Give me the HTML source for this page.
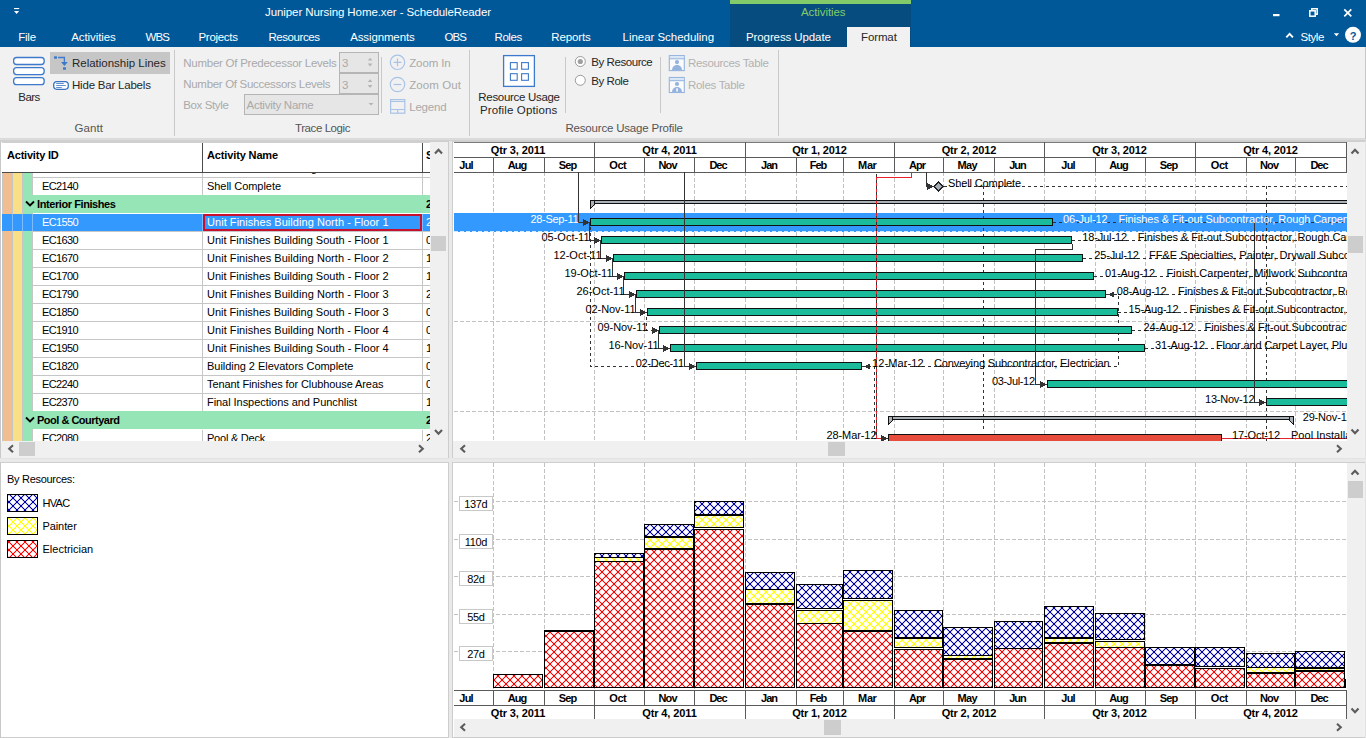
<!DOCTYPE html>
<html lang="en"><head><meta charset="utf-8"><title>Juniper Nursing Home.xer - ScheduleReader</title>
<style>
html,body{margin:0;padding:0}
body{width:1366px;height:738px;overflow:hidden;background:#e3e3e3;font-family:"Liberation Sans",sans-serif;font-size:11px;position:relative}
.t{position:absolute;white-space:pre;line-height:1}
.b{position:absolute;box-sizing:border-box}
svg{position:absolute;overflow:hidden}
svg text{font-family:"Liberation Sans",sans-serif;font-size:11px;white-space:pre}
</style></head>
<body>
<div id="titlebar">
<div class="b " style="left:0px;top:0px;width:1366px;height:47px;background:#005899;"></div>
<div class="b " style="left:730px;top:0px;width:181px;height:47px;background:#074c7f;"></div>
<div class="b " style="left:730px;top:0px;width:181px;height:4px;background:#83cb68;"></div>
<svg style="left:12px;top:6px" width="10" height="9" viewBox="0 0 10 9"><rect x="2" y="2" width="5.2" height="1.100" fill="#fff"/><path d="M2 5h5.2l-2.600 3z" fill="#fff"/></svg>
<span class="t " style="left:265px;top:7px;font-size:11.5px;color:#fff;letter-spacing:-0.085px;">Juniper Nursing Home.xer - ScheduleReader</span>
<span class="t " style="left:801px;top:7px;font-size:11.5px;color:#83cb68;letter-spacing:-0.087px;">Activities</span>
<svg style="left:1266px;top:4px" width="94" height="18" viewBox="1266 4 94 18" fill="none" stroke="#fff"><rect x="1273" y="14" width="6.5" height="2.2" fill="#fff" stroke="none"/><path d="M1311.8 10.5v-1.7h5.4v5.4h-1.7" stroke-width="1.5"/><rect x="1309.8" y="10.8" width="5.4" height="5.4" stroke-width="1.5"/><path d="M1344.3 9.3l7 7m0-7l-7 7" stroke-width="1.7"/></svg>
<svg style="left:1284px;top:26px" width="82" height="20" viewBox="1284 26 82 20"><path d="M1286.3 37.3l3.3-3.4 3.3 3.4" fill="none" stroke="#fff" stroke-width="1.9"/><path d="M1333.8 33.2h5.4l-2.7 3z" fill="#fff"/><circle cx="1353" cy="34.8" r="8" fill="#fff"/><text x="1353" y="39.6" font-size="13" font-weight="bold" text-anchor="middle" fill="#005899">?</text></svg>
<span class="t " style="left:1300.5px;top:32px;font-size:11.5px;color:#fff;letter-spacing:-0.416px;">Style</span>
<div class="b " style="left:847px;top:27px;width:63px;height:20px;background:#f1f1f1;"></div>
<span class="t " style="left:18.3px;top:32px;font-size:11.5px;color:#fff;letter-spacing:-0.258px;">File</span>
<span class="t " style="left:71.2px;top:32px;font-size:11.5px;color:#fff;letter-spacing:-0.087px;">Activities</span>
<span class="t " style="left:145.5px;top:32px;font-size:11.5px;color:#fff;letter-spacing:-0.901px;">WBS</span>
<span class="t " style="left:198.5px;top:32px;font-size:11.5px;color:#fff;letter-spacing:-0.306px;">Projects</span>
<span class="t " style="left:268.4px;top:32px;font-size:11.5px;color:#fff;letter-spacing:-0.408px;">Resources</span>
<span class="t " style="left:350.2px;top:32px;font-size:11.5px;color:#fff;letter-spacing:-0.131px;">Assignments</span>
<span class="t " style="left:444.6px;top:32px;font-size:11.5px;color:#fff;letter-spacing:-0.966px;">OBS</span>
<span class="t " style="left:494.5px;top:32px;font-size:11.5px;color:#fff;letter-spacing:-0.421px;">Roles</span>
<span class="t " style="left:551.3px;top:32px;font-size:11.5px;color:#fff;letter-spacing:-0.140px;">Reports</span>
<span class="t " style="left:622.6px;top:32px;font-size:11.5px;color:#fff;letter-spacing:-0.040px;">Linear Scheduling</span>
<span class="t " style="left:746px;top:32px;font-size:11.5px;color:#fff;letter-spacing:-0.100px;">Progress Update</span>
<span class="t " style="left:861px;top:32px;font-size:11.5px;color:#262626;letter-spacing:-0.120px;">Format</span>
</div>
<div id="ribbon">
<div class="b " style="left:0px;top:47px;width:1366px;height:92px;background:#f1f1f1;"></div>
<div class="b " style="left:0px;top:138px;width:1366px;height:1px;background:#dadada;"></div>
<div class="b " style="left:1365px;top:47px;width:1px;height:92px;background:#c6c6c6;"></div>
<div class="b " style="left:174px;top:50px;width:1px;height:86px;background:#c9c9c9;"></div>
<div class="b " style="left:469px;top:50px;width:1px;height:86px;background:#c9c9c9;"></div>
<div class="b " style="left:778px;top:50px;width:1px;height:86px;background:#c9c9c9;"></div>
<div class="b " style="left:381px;top:57px;width:1px;height:56px;background:#c9c9c9;"></div>
<div class="b " style="left:565px;top:57px;width:1px;height:56px;background:#c9c9c9;"></div>
<div class="b " style="left:660px;top:57px;width:1px;height:56px;background:#c9c9c9;"></div>
<svg style="left:12px;top:55px" width="36" height="32" viewBox="12 55 36 32" fill="#fff" stroke="#3d7acb" stroke-width="1.3"><rect x="13.6" y="57.5" width="30.6" height="7" rx="3"/><rect x="13.6" y="67.6" width="30.6" height="7" rx="3"/><rect x="13.6" y="77.7" width="30.6" height="7" rx="3"/></svg>
<span class="t " style="left:18.3px;top:92px;font-size:11.5px;color:#262626;letter-spacing:-0.539px;">Bars</span>
<div class="b " style="left:50px;top:52px;width:120px;height:22px;background:#c6c6c6;"></div>
<svg style="left:52px;top:54px" width="18" height="18" viewBox="52 54 18 18"><rect x="54" y="56.2" width="3" height="2.600" rx="0.6" fill="#3d7acb"/><path d="M58.1 57.5H64.4V62.4" fill="none" stroke="#3d7acb" stroke-width="1.3"/><path d="M61 62h6.800l-3.400 4.100z" fill="#3d7acb"/><rect x="63" y="67.2" width="3" height="2.600" rx="0.6" fill="#3d7acb"/></svg>
<span class="t " style="left:72px;top:58px;font-size:11.5px;color:#262626;letter-spacing:-0.016px;">Relationship Lines</span>
<svg style="left:52px;top:79px" width="18" height="12" viewBox="52 79 18 12" fill="none" stroke="#3a72c0"><rect x="53.7" y="81.600" width="14.6" height="7.700" rx="3.2" fill="#fff" stroke-width="1.3"/><path d="M56.200 83.5h7.600M56.200 85.500h9.600M56.200 87.500h5.600" stroke-width="0.8"/></svg>
<span class="t " style="left:72px;top:80px;font-size:11.5px;color:#262626;letter-spacing:-0.209px;">Hide Bar Labels</span>
<span class="t " style="left:74.6px;top:123px;font-size:11.5px;color:#555;letter-spacing:0.052px;">Gantt</span>
<span class="t " style="left:183.3px;top:58px;font-size:11.5px;color:#a9a9a9;letter-spacing:-0.258px;">Number Of Predecessor Levels</span>
<span class="t " style="left:183.3px;top:79px;font-size:11.5px;color:#a9a9a9;letter-spacing:-0.312px;">Number Of Successors Levels</span>
<span class="t " style="left:183.3px;top:100px;font-size:11.5px;color:#a9a9a9;letter-spacing:-0.386px;">Box Style</span>
<div class="b " style="left:339px;top:52px;width:40px;height:21px;background:#e6e6e6;border:1px solid #b5b5b5"></div>
<div class="b " style="left:339px;top:73px;width:40px;height:21px;background:#e6e6e6;border:1px solid #b5b5b5"></div>
<div class="b " style="left:244px;top:94px;width:135px;height:21px;background:#e6e6e6;border:1px solid #b5b5b5"></div>
<span class="t " style="left:342px;top:58px;font-size:11.5px;color:#a9a9a9;">3</span>
<span class="t " style="left:342px;top:80px;font-size:11.5px;color:#a9a9a9;">3</span>
<span class="t " style="left:246.5px;top:100px;font-size:11.5px;color:#a9a9a9;letter-spacing:-0.254px;">Activity Name</span>
<svg style="left:366px;top:55px" width="10" height="58" viewBox="366 55 10 58" fill="#b4b4b4"><path d="M367.8 60.5h4.6l-2.3-2.8zM367.8 63.6h4.6l-2.3 2.8zM367.8 82h4.6l-2.3-2.8zM367.8 85.100h4.6l-2.3 2.8zM368.5 103h5l-2.5 2.6z"/></svg>
<svg style="left:388px;top:53px" width="20" height="62" viewBox="388 53 20 62" fill="none" stroke="#a9c3e6" stroke-width="1.2"><circle cx="397.5" cy="62.3" r="7.2"/><path d="M393.6 62.3h7.8M397.5 58.400v7.8"/><circle cx="397.5" cy="84.500" r="7.2"/><path d="M393.6 84.500h7.8"/><rect x="390.6" y="99.6" width="14.2" height="13.6"/><path d="M390.6 101.500h14.2M390.6 109.5h14.2M397.7 109.5v3.7"/></svg>
<span class="t " style="left:409.2px;top:58px;font-size:11.5px;color:#a9a9a9;letter-spacing:-0.112px;">Zoom In</span>
<span class="t " style="left:409.2px;top:80px;font-size:11.5px;color:#a9a9a9;letter-spacing:0.082px;">Zoom Out</span>
<span class="t " style="left:409.2px;top:102px;font-size:11.5px;color:#a9a9a9;letter-spacing:-0.179px;">Legend</span>
<span class="t " style="left:295px;top:123px;font-size:11.5px;color:#555;letter-spacing:-0.423px;">Trace Logic</span>
<svg style="left:502px;top:54px" width="34" height="34" viewBox="502 54 34 34" fill="#fff" stroke="#3d7acb" stroke-width="1.3"><rect x="503.6" y="55.6" width="30.8" height="30.8"/><g stroke-width="1.1"><rect x="510.4" y="62.6" width="6.8" height="6.6"/><rect x="521.6" y="62.6" width="6.8" height="6.6"/><rect x="510.4" y="73.700" width="6.8" height="6.6"/><rect x="521.6" y="73.700" width="6.8" height="6.6"/></g></svg>
<span class="t " style="left:478.3px;top:92px;font-size:11.5px;color:#262626;letter-spacing:-0.304px;">Resource Usage</span>
<span class="t " style="left:480px;top:105px;font-size:11.5px;color:#262626;letter-spacing:0.131px;">Profile Options</span>
<svg style="left:573px;top:54px" width="14" height="34" viewBox="573 54 14 34"><circle cx="580.3" cy="61.5" r="5" fill="#fff" stroke="#9a9a9a"/><circle cx="580.3" cy="61.5" r="2.6" fill="#a0a0a0"/><circle cx="580.3" cy="80.300" r="5" fill="#fff" stroke="#9a9a9a"/></svg>
<span class="t " style="left:591.3px;top:57px;font-size:11.5px;color:#262626;letter-spacing:-0.440px;">By Resource</span>
<span class="t " style="left:591.3px;top:76px;font-size:11.5px;color:#262626;letter-spacing:-0.454px;">By Role</span>
<svg style="left:668px;top:54px" width="18" height="40" viewBox="668 54 18 40"><rect x="669.3" y="55.6" width="15" height="15" fill="#fbfbfb" stroke="#94b3de" stroke-width="1.1"/><rect x="669.9" y="56.2" width="13.8" height="2.600" fill="#d9e6f6"/><path d="M669.3 58.8h15" stroke="#94b3de" stroke-width="1"/><circle cx="677" cy="62.1" r="2.1" fill="#94b3de"/><path d="M672 70.1c0.300-6.800 9.700-6.800 10 0z" fill="#94b3de"/><rect x="669.3" y="77.5" width="15" height="15" fill="#fbfbfb" stroke="#94b3de" stroke-width="1.1"/><rect x="669.9" y="78.1" width="13.8" height="2.600" fill="#d9e6f6"/><path d="M669.3 80.7h15" stroke="#94b3de" stroke-width="1"/><circle cx="677" cy="84" r="2.1" fill="#94b3de"/><path d="M672 92c0.300-6.800 9.700-6.800 10 0z" fill="#94b3de"/><path d="M676.3 88.3h1.500v3.300h-1.500z" fill="#fff"/></svg>
<span class="t " style="left:688px;top:58px;font-size:11.5px;color:#b2b2b2;letter-spacing:-0.330px;">Resources Table</span>
<span class="t " style="left:688px;top:80px;font-size:11.5px;color:#b2b2b2;letter-spacing:-0.290px;">Roles Table</span>
<span class="t " style="left:565.5px;top:123px;font-size:11.5px;color:#555;letter-spacing:-0.193px;">Resource Usage Profile</span>
</div>
<div id="table">
<div class="b " style="left:0px;top:139px;width:1366px;height:3px;background:#dcdcdc;"></div>
<div class="b " style="left:0px;top:140px;width:1366px;height:1px;background:#d0d0d0;"></div>
<div class="b " style="left:0px;top:141px;width:449px;height:317px;background:#fff;border-left:1px solid #c8c8c8;border-top:1px solid #cfcfcf;border-right:1px solid #cdcdcd;border-bottom:1px solid #cdcdcd"></div>
<div class="b" style="left:2px;top:142px;width:428px;height:299px;overflow:hidden">
<span class="t " style="left:5px;top:8px;font-size:11px;color:#000;font-weight:bold;letter-spacing:-0.209px;">Activity ID</span>
<span class="t " style="left:205px;top:8px;font-size:11px;color:#000;font-weight:bold;letter-spacing:-0.136px;">Activity Name</span>
<span class="t " style="left:424px;top:8px;font-size:11px;color:#000;font-weight:bold;">Start</span>
<div class="b " style="left:200px;top:0px;width:1px;height:30px;background:#4a4a4a;"></div>
<div class="b " style="left:420px;top:0px;width:1px;height:30px;background:#4a4a4a;"></div>
<div class="b " style="left:0px;top:30px;width:428px;height:1px;background:#4a4a4a;"></div>
<div class="b " style="left:0px;top:0px;width:428px;height:1px;background:#d0d0d0;"></div>
<div class="b " style="left:0px;top:31px;width:1px;height:268px;background:#c6c6c6;"></div>
<div class="b " style="left:1px;top:31px;width:9px;height:268px;background:#f2be90;"></div>
<div class="b " style="left:10px;top:31px;width:1px;height:268px;background:#c6c6c6;"></div>
<div class="b " style="left:11px;top:31px;width:9px;height:268px;background:#f9df85;"></div>
<div class="b " style="left:20px;top:31px;width:1px;height:268px;background:#c6c6c6;"></div>
<div class="b " style="left:21px;top:31px;width:9px;height:268px;background:#96e5b6;"></div>
<div class="b " style="left:30px;top:31px;width:1px;height:268px;background:#c6c6c6;"></div>
<div class="b " style="left:31px;top:35px;width:397px;height:1px;background:#c6c6c6;"></div>
<div class="b " style="left:200px;top:31px;width:1px;height:4px;background:#c6c6c6;"></div>
<div class="b " style="left:420px;top:31px;width:1px;height:4px;background:#c6c6c6;"></div>
<div class="b" style="left:31px;top:31px;width:397px;height:4px;overflow:hidden">
<span class="t " style="left:245px;top:-10px;font-size:11px;color:#000;">Building</span>
</div>
<span class="t " style="left:40px;top:39px;font-size:11px;color:#000;letter-spacing:-0.628px;">EC2140</span>
<span class="t " style="left:205px;top:39px;font-size:11px;color:#000;letter-spacing:-0.042px;">Shell Complete</span>
<span class="t " style="left:424px;top:39px;font-size:11px;color:#000;"></span>
<div class="b " style="left:31px;top:53px;width:397px;height:1px;background:#c6c6c6;"></div>
<div class="b " style="left:200px;top:36px;width:1px;height:17px;background:#c6c6c6;"></div>
<div class="b " style="left:420px;top:36px;width:1px;height:17px;background:#c6c6c6;"></div>
<div class="b " style="left:21px;top:53px;width:407px;height:18px;background:#96e5b6;"></div>
<svg style="left:23px;top:57.5px" width="10" height="8" viewBox="0 0 10 8"><path d="M1 1.500l4 4 4-4" fill="none" stroke="#000" stroke-width="1.800"/></svg>
<span class="t " style="left:35px;top:57px;font-size:11px;color:#000;font-weight:bold;letter-spacing:-0.416px;">Interior Finishes</span>
<span class="t " style="left:424px;top:57px;font-size:11px;color:#000;font-weight:bold;">2</span>
<div class="b " style="left:0px;top:72px;width:428px;height:17px;background:#3399ff;"></div>
<div class="b " style="left:10px;top:72px;width:1px;height:17px;background:#7dbcff;"></div>
<div class="b " style="left:20px;top:72px;width:1px;height:17px;background:#7dbcff;"></div>
<div class="b " style="left:30px;top:72px;width:1px;height:17px;background:#7dbcff;"></div>
<span class="t " style="left:40px;top:75px;font-size:11px;color:#fff;letter-spacing:-0.628px;">EC1550</span>
<span class="t " style="left:205px;top:75px;font-size:11px;color:#fff;letter-spacing:0.049px;">Unit Finishes Building North - Floor 1</span>
<span class="t " style="left:424px;top:75px;font-size:11px;color:#fff;">2</span>
<div class="b " style="left:31px;top:89px;width:397px;height:1px;background:#c6c6c6;"></div>
<div class="b " style="left:200px;top:72px;width:1px;height:17px;background:#7dbcff;"></div>
<div class="b " style="left:420px;top:72px;width:1px;height:17px;background:#7dbcff;"></div>
<div class="b " style="left:201px;top:72px;width:219px;height:17px;border:2px solid #c8102e"></div>
<span class="t " style="left:40px;top:93px;font-size:11px;color:#000;letter-spacing:-0.628px;">EC1630</span>
<span class="t " style="left:205px;top:93px;font-size:11px;color:#000;letter-spacing:0.000px;">Unit Finishes Building South - Floor 1</span>
<span class="t " style="left:424px;top:93px;font-size:11px;color:#000;">0</span>
<div class="b " style="left:31px;top:107px;width:397px;height:1px;background:#c6c6c6;"></div>
<div class="b " style="left:200px;top:90px;width:1px;height:17px;background:#c6c6c6;"></div>
<div class="b " style="left:420px;top:90px;width:1px;height:17px;background:#c6c6c6;"></div>
<span class="t " style="left:40px;top:111px;font-size:11px;color:#000;letter-spacing:-0.628px;">EC1670</span>
<span class="t " style="left:205px;top:111px;font-size:11px;color:#000;letter-spacing:0.049px;">Unit Finishes Building North - Floor 2</span>
<span class="t " style="left:424px;top:111px;font-size:11px;color:#000;">1</span>
<div class="b " style="left:31px;top:125px;width:397px;height:1px;background:#c6c6c6;"></div>
<div class="b " style="left:200px;top:108px;width:1px;height:17px;background:#c6c6c6;"></div>
<div class="b " style="left:420px;top:108px;width:1px;height:17px;background:#c6c6c6;"></div>
<span class="t " style="left:40px;top:129px;font-size:11px;color:#000;letter-spacing:-0.628px;">EC1700</span>
<span class="t " style="left:205px;top:129px;font-size:11px;color:#000;letter-spacing:0.000px;">Unit Finishes Building South - Floor 2</span>
<span class="t " style="left:424px;top:129px;font-size:11px;color:#000;">1</span>
<div class="b " style="left:31px;top:143px;width:397px;height:1px;background:#c6c6c6;"></div>
<div class="b " style="left:200px;top:126px;width:1px;height:17px;background:#c6c6c6;"></div>
<div class="b " style="left:420px;top:126px;width:1px;height:17px;background:#c6c6c6;"></div>
<span class="t " style="left:40px;top:147px;font-size:11px;color:#000;letter-spacing:-0.628px;">EC1790</span>
<span class="t " style="left:205px;top:147px;font-size:11px;color:#000;letter-spacing:0.049px;">Unit Finishes Building North - Floor 3</span>
<span class="t " style="left:424px;top:147px;font-size:11px;color:#000;">2</span>
<div class="b " style="left:31px;top:161px;width:397px;height:1px;background:#c6c6c6;"></div>
<div class="b " style="left:200px;top:144px;width:1px;height:17px;background:#c6c6c6;"></div>
<div class="b " style="left:420px;top:144px;width:1px;height:17px;background:#c6c6c6;"></div>
<span class="t " style="left:40px;top:165px;font-size:11px;color:#000;letter-spacing:-0.628px;">EC1850</span>
<span class="t " style="left:205px;top:165px;font-size:11px;color:#000;letter-spacing:0.000px;">Unit Finishes Building South - Floor 3</span>
<span class="t " style="left:424px;top:165px;font-size:11px;color:#000;">0</span>
<div class="b " style="left:31px;top:179px;width:397px;height:1px;background:#c6c6c6;"></div>
<div class="b " style="left:200px;top:162px;width:1px;height:17px;background:#c6c6c6;"></div>
<div class="b " style="left:420px;top:162px;width:1px;height:17px;background:#c6c6c6;"></div>
<span class="t " style="left:40px;top:183px;font-size:11px;color:#000;letter-spacing:-0.628px;">EC1910</span>
<span class="t " style="left:205px;top:183px;font-size:11px;color:#000;letter-spacing:0.049px;">Unit Finishes Building North - Floor 4</span>
<span class="t " style="left:424px;top:183px;font-size:11px;color:#000;">0</span>
<div class="b " style="left:31px;top:197px;width:397px;height:1px;background:#c6c6c6;"></div>
<div class="b " style="left:200px;top:180px;width:1px;height:17px;background:#c6c6c6;"></div>
<div class="b " style="left:420px;top:180px;width:1px;height:17px;background:#c6c6c6;"></div>
<span class="t " style="left:40px;top:201px;font-size:11px;color:#000;letter-spacing:-0.628px;">EC1950</span>
<span class="t " style="left:205px;top:201px;font-size:11px;color:#000;letter-spacing:0.000px;">Unit Finishes Building South - Floor 4</span>
<span class="t " style="left:424px;top:201px;font-size:11px;color:#000;">1</span>
<div class="b " style="left:31px;top:215px;width:397px;height:1px;background:#c6c6c6;"></div>
<div class="b " style="left:200px;top:198px;width:1px;height:17px;background:#c6c6c6;"></div>
<div class="b " style="left:420px;top:198px;width:1px;height:17px;background:#c6c6c6;"></div>
<span class="t " style="left:40px;top:219px;font-size:11px;color:#000;letter-spacing:-0.628px;">EC1820</span>
<span class="t " style="left:205px;top:219px;font-size:11px;color:#000;letter-spacing:-0.037px;">Building 2 Elevators Complete</span>
<span class="t " style="left:424px;top:219px;font-size:11px;color:#000;">0</span>
<div class="b " style="left:31px;top:233px;width:397px;height:1px;background:#c6c6c6;"></div>
<div class="b " style="left:200px;top:216px;width:1px;height:17px;background:#c6c6c6;"></div>
<div class="b " style="left:420px;top:216px;width:1px;height:17px;background:#c6c6c6;"></div>
<span class="t " style="left:40px;top:237px;font-size:11px;color:#000;letter-spacing:-0.628px;">EC2240</span>
<span class="t " style="left:205px;top:237px;font-size:11px;color:#000;letter-spacing:-0.099px;">Tenant Finishes for Clubhouse Areas</span>
<span class="t " style="left:424px;top:237px;font-size:11px;color:#000;">0</span>
<div class="b " style="left:31px;top:251px;width:397px;height:1px;background:#c6c6c6;"></div>
<div class="b " style="left:200px;top:234px;width:1px;height:17px;background:#c6c6c6;"></div>
<div class="b " style="left:420px;top:234px;width:1px;height:17px;background:#c6c6c6;"></div>
<span class="t " style="left:40px;top:255px;font-size:11px;color:#000;letter-spacing:-0.628px;">EC2370</span>
<span class="t " style="left:205px;top:255px;font-size:11px;color:#000;letter-spacing:-0.053px;">Final Inspections and Punchlist</span>
<span class="t " style="left:424px;top:255px;font-size:11px;color:#000;">1</span>
<div class="b " style="left:31px;top:269px;width:397px;height:1px;background:#c6c6c6;"></div>
<div class="b " style="left:200px;top:252px;width:1px;height:17px;background:#c6c6c6;"></div>
<div class="b " style="left:420px;top:252px;width:1px;height:17px;background:#c6c6c6;"></div>
<div class="b " style="left:21px;top:269px;width:407px;height:18px;background:#96e5b6;"></div>
<svg style="left:23px;top:273.5px" width="10" height="8" viewBox="0 0 10 8"><path d="M1 1.500l4 4 4-4" fill="none" stroke="#000" stroke-width="1.800"/></svg>
<span class="t " style="left:35px;top:273px;font-size:11px;color:#000;font-weight:bold;letter-spacing:-0.497px;">Pool &amp; Courtyard</span>
<span class="t " style="left:424px;top:273px;font-size:11px;color:#000;font-weight:bold;">2</span>
<span class="t " style="left:40px;top:291px;font-size:11px;color:#000;letter-spacing:-0.628px;">EC2080</span>
<span class="t " style="left:205px;top:291px;font-size:11px;color:#000;letter-spacing:-0.230px;">Pool &amp; Deck</span>
<span class="t " style="left:424px;top:291px;font-size:11px;color:#000;">2</span>
<div class="b " style="left:31px;top:305px;width:397px;height:1px;background:#c6c6c6;"></div>
<div class="b " style="left:200px;top:288px;width:1px;height:17px;background:#c6c6c6;"></div>
<div class="b " style="left:420px;top:288px;width:1px;height:17px;background:#c6c6c6;"></div>
</div>
<div class="b " style="left:430px;top:142px;width:18px;height:299px;background:#f0f0f0;"></div>
<div class="b " style="left:431px;top:236px;width:15px;height:15px;background:#cdcdcd;"></div>
<svg style="left:430px;top:142px" width="18" height="299" viewBox="430 142 18 299" fill="none" stroke="#5c5c5c" stroke-width="2.100"><path d="M435 153.500l3.500-3.800 3.500 3.800"/><path d="M435 430l3.500 3.800 3.500-3.800"/></svg>
<div class="b " style="left:1px;top:441px;width:447px;height:17px;background:#f0f0f0;"></div>
<div class="b " style="left:19px;top:442px;width:16px;height:14px;background:#cdcdcd;"></div>
<svg style="left:1px;top:441px" width="447" height="16" viewBox="1 441 447 16" fill="none" stroke="#5c5c5c" stroke-width="2.100"><path d="M13 445.200l-3.800 3.500 3.800 3.500"/><path d="M419 445.200l3.800 3.500-3.800 3.500"/></svg>
</div>
<div id="gantt">
<div class="b " style="left:449px;top:141px;width:4px;height:321px;background:#e9e9e9;"></div>
<div class="b " style="left:452px;top:141px;width:913px;height:317px;background:#fff;border-left:1px solid #cdcdcd;border-top:1px solid #cfcfcf;border-right:1px solid #cdcdcd;border-bottom:1px solid #cdcdcd"></div>
<svg style="left:454px;top:142px" width="893" height="299" viewBox="454 142 893 299" shape-rendering="crispEdges"><g stroke="#c2c2c2" stroke-dasharray="4 2" fill="none"><path d="M493.5 172V441"/><path d="M544.5 172V441"/><path d="M594.5 172V441"/><path d="M644.5 172V441"/><path d="M694.5 172V441"/><path d="M745.5 172V441"/><path d="M796.5 172V441"/><path d="M843.5 172V441"/><path d="M894.5 172V441"/><path d="M943.5 172V441"/><path d="M994.5 172V441"/><path d="M1044.5 172V441"/><path d="M1095.5 172V441"/><path d="M1145.5 172V441"/><path d="M1195.5 172V441"/><path d="M1246.5 172V441"/><path d="M1295.5 172V441"/><path d="M454 231.5H1347"/><path d="M454 321.5H1347"/><path d="M454 411.5H1347"/></g><rect x="454" y="213" width="893" height="19" fill="#3399ff"/><path d="M454 231.500H1347" stroke="#d6eaff" stroke-dasharray="4 2"/><rect x="454" y="142" width="893" height="30" fill="#fff"/><path d="M454 142.500H1347" stroke="#7a7a7a"/><g stroke="#5a5a5a" fill="none"><path d="M454 157.500H1347M454 172.500H1347"/><path d="M493.5 158V172"/><path d="M544.5 158V172"/><path d="M594.5 142V172"/><path d="M644.5 158V172"/><path d="M694.5 158V172"/><path d="M745.5 142V172"/><path d="M796.5 158V172"/><path d="M843.5 158V172"/><path d="M894.5 142V172"/><path d="M943.5 158V172"/><path d="M994.5 158V172"/><path d="M1044.5 142V172"/><path d="M1095.5 158V172"/><path d="M1145.5 158V172"/><path d="M1195.5 142V172"/><path d="M1246.5 158V172"/><path d="M1295.5 158V172"/><path d="M1346.5 142V172"/></g><g shape-rendering="auto"><text x="490.7" y="154" textLength="54.6" lengthAdjust="spacing" font-weight="bold">Qtr 3, 2011</text><text x="642.2" y="154" textLength="54.6" lengthAdjust="spacing" font-weight="bold">Qtr 4, 2011</text><text x="792.2" y="154" textLength="54.6" lengthAdjust="spacing" font-weight="bold">Qtr 1, 2012</text><text x="941.7" y="154" textLength="54.6" lengthAdjust="spacing" font-weight="bold">Qtr 2, 2012</text><text x="1092.2" y="154" textLength="54.6" lengthAdjust="spacing" font-weight="bold">Qtr 3, 2012</text><text x="1243.2" y="154" textLength="54.6" lengthAdjust="spacing" font-weight="bold">Qtr 4, 2012</text><text x="459.342" y="169" textLength="14.3" lengthAdjust="spacing" font-weight="bold">Jul</text><text x="507.874" y="169" textLength="19.3" lengthAdjust="spacing" font-weight="bold">Aug</text><text x="558.75" y="169" textLength="18.5" lengthAdjust="spacing" font-weight="bold">Sep</text><text x="609.25" y="169" textLength="17.5" lengthAdjust="spacing" font-weight="bold">Oct</text><text x="658.5" y="169" textLength="19.0" lengthAdjust="spacing" font-weight="bold">Nov</text><text x="709.416" y="169" textLength="18.2" lengthAdjust="spacing" font-weight="bold">Dec</text><text x="760.964" y="169" textLength="17.1" lengthAdjust="spacing" font-weight="bold">Jan</text><text x="809.697" y="169" textLength="17.6" lengthAdjust="spacing" font-weight="bold">Feb</text><text x="858.1" y="169" textLength="18.8" lengthAdjust="spacing" font-weight="bold">Mar</text><text x="908.971" y="169" textLength="17.1" lengthAdjust="spacing" font-weight="bold">Apr</text><text x="957.5" y="169" textLength="20.0" lengthAdjust="spacing" font-weight="bold">May</text><text x="1009.2" y="169" textLength="17.6" lengthAdjust="spacing" font-weight="bold">Jun</text><text x="1061.34" y="169" textLength="14.3" lengthAdjust="spacing" font-weight="bold">Jul</text><text x="1109.37" y="169" textLength="19.3" lengthAdjust="spacing" font-weight="bold">Aug</text><text x="1159.75" y="169" textLength="18.5" lengthAdjust="spacing" font-weight="bold">Sep</text><text x="1210.75" y="169" textLength="17.5" lengthAdjust="spacing" font-weight="bold">Oct</text><text x="1260" y="169" textLength="19.0" lengthAdjust="spacing" font-weight="bold">Nov</text><text x="1310.42" y="169" textLength="18.2" lengthAdjust="spacing" font-weight="bold">Dec</text></g><g stroke="#333" fill="none"><path d="M646.5 317V330.5H653" stroke-dasharray="3 3"/><path d="M590.500 227V366.500H690" stroke-dasharray="3 3"/><path d="M944 186.500H1347" stroke-dasharray="3 3"/><path d="M983.500 186V432" stroke-dasharray="3 3"/><path d="M1266.500 186V441" stroke-dasharray="3 3"/><path d="M862 366.500H1118.500V294.500H1113" stroke-dasharray="3 3"/><path d="M874.500 366V438.500H882" stroke-dasharray="3 3"/><path d="M1053 222.5H1347" stroke-dasharray="3 3"/><path d="M1072 240.5H1347" stroke-dasharray="3 3"/><path d="M1083 258.5H1347" stroke-dasharray="3 3"/><path d="M1094 276.5H1347" stroke-dasharray="3 3"/><path d="M1106 294.5H1347" stroke-dasharray="3 3"/><path d="M1118 312.5H1347" stroke-dasharray="3 3"/><path d="M1132 330.5H1347" stroke-dasharray="3 3"/><path d="M1145 348.5H1347" stroke-dasharray="3 3"/></g><rect x="590.5" y="200.5" width="769" height="3" fill="#a9b1b9" stroke="#111"/><path d="M590.5 200.5v8l4-4v-4z" fill="#a9b1b9" stroke="#111"/><rect x="590.5" y="218.5" width="462" height="7" fill="#1abc9c" stroke="#111"/><rect x="601.5" y="236.5" width="470" height="7" fill="#1abc9c" stroke="#111"/><rect x="613.5" y="254.5" width="469" height="7" fill="#1abc9c" stroke="#111"/><rect x="624.5" y="272.5" width="469" height="7" fill="#1abc9c" stroke="#111"/><rect x="636.5" y="290.5" width="469" height="7" fill="#1abc9c" stroke="#111"/><rect x="647.5" y="308.5" width="470" height="7" fill="#1abc9c" stroke="#111"/><rect x="659.5" y="326.5" width="472" height="7" fill="#1abc9c" stroke="#111"/><rect x="670.5" y="344.5" width="474" height="7" fill="#1abc9c" stroke="#111"/><rect x="696.5" y="362.5" width="165" height="7" fill="#1abc9c" stroke="#111"/><rect x="1047.5" y="380.5" width="312" height="7" fill="#1abc9c" stroke="#111"/><rect x="1266.5" y="398.5" width="93" height="7" fill="#1abc9c" stroke="#111"/><rect x="888.5" y="416.5" width="405" height="3" fill="#a9b1b9" stroke="#111"/><path d="M888.5 416.5v8l4-4v-4z" fill="#a9b1b9" stroke="#111"/><path d="M1293.5 416.5v8l-4-4v-4z" fill="#a9b1b9" stroke="#111"/><rect x="888.5" y="434.5" width="333" height="7" fill="#e74c3c" stroke="#111"/><g stroke="#333" fill="none"><path d="M578.500 172V222.500H584"/><path d="M684.500 172V366.500H690"/><path d="M589.5 222.5V240.5H595"/><path d="M600.5 240.5V258.5H607"/><path d="M612.5 258.5V276.5H618"/><path d="M623.5 276.5V294.5H630"/><path d="M635.5 294.5V312.5H641"/><path d="M658.5 330.5V348.5H664"/><path d="M926.500 172V186.500H932"/><path d="M1072.500 244V249.500H1035.500V384.500H1041"/><path d="M1254.500 222V402.500H1260"/></g><g stroke="#e8212b" fill="none"><path d="M911.500 172V177.500H876.500V438.500H882"/><path d="M1222 438.500H1347"/></g><path d="M590 222.5l-7-3.500v7z" fill="#333"/><path d="M601 240.5l-7-3.500v7z" fill="#333"/><path d="M613 258.5l-7-3.500v7z" fill="#333"/><path d="M624 276.5l-7-3.500v7z" fill="#333"/><path d="M636 294.5l-7-3.500v7z" fill="#333"/><path d="M647 312.5l-7-3.500v7z" fill="#333"/><path d="M659 330.5l-7-3.500v7z" fill="#333"/><path d="M670 348.5l-7-3.500v7z" fill="#333"/><path d="M696 366.5l-7-3.500v7z" fill="#333"/><path d="M1047 384.5l-7-3.500v7z" fill="#333"/><path d="M1266 402.5l-7-3.500v7z" fill="#333"/><path d="M888 438.5l-7-3.500v7z" fill="#333"/><path d="M1108 294.5l6-3v6z" fill="#333"/><path d="M864 366.5l6-3v6z" fill="#333"/><path d="M938.500 182l4.500 4.500-4.500 4.500-4.500-4.500z" fill="#a6adb4" stroke="#222"/><path d="M934 186.5l-7-3.500v7z" fill="#333"/><path d="M876.500 174V438" stroke="#333" stroke-dasharray="3 3" fill="none"/><g shape-rendering="auto"><text x="530.5" y="223" textLength="48.0" lengthAdjust="spacing" fill="#fff">28-Sep-11</text><text x="541.5" y="241" textLength="48.0" lengthAdjust="spacing">05-Oct-11</text><text x="553.5" y="259" textLength="48.0" lengthAdjust="spacing">12-Oct-11</text><text x="564.5" y="277" textLength="48.0" lengthAdjust="spacing">19-Oct-11</text><text x="576.5" y="295" textLength="48.0" lengthAdjust="spacing">26-Oct-11</text><text x="585.5" y="313" textLength="50.0" lengthAdjust="spacing">02-Nov-11</text><text x="597.5" y="331" textLength="50.0" lengthAdjust="spacing">09-Nov-11</text><text x="608.5" y="349" textLength="50.0" lengthAdjust="spacing">16-Nov-11</text><text x="635.7" y="367" textLength="48.3" lengthAdjust="spacing">02-Dec-11</text><text x="992" y="385" textLength="43.0" lengthAdjust="spacing">03-Jul-12</text><text x="1205" y="403" textLength="49.5" lengthAdjust="spacing">13-Nov-12</text><text x="826.5" y="439" textLength="50.0" lengthAdjust="spacing">28-Mar-12</text><text x="1063" y="223" textLength="44.7" lengthAdjust="spacing" fill="#fff">06-Jul-12</text><text x="1118.5" y="223" textLength="243.0" lengthAdjust="spacing" fill="#fff">Finishes &amp; Fit-out Subcontractor, Rough Carpenter</text><text x="1082.3" y="241" textLength="44.7" lengthAdjust="spacing">18-Jul-12</text><text x="1137.7" y="241" textLength="243.0" lengthAdjust="spacing">Finishes &amp; Fit-out Subcontractor, Rough Carpenter</text><text x="1094.2" y="259" textLength="44.7" lengthAdjust="spacing">25-Jul-12</text><text x="1149" y="259" textLength="238.0" lengthAdjust="spacing">FF&amp;E Specialties, Painter, Drywall Subcontractor</text><text x="1105" y="277" textLength="50.0" lengthAdjust="spacing">01-Aug-12</text><text x="1166.5" y="277" textLength="200.0" lengthAdjust="spacing">Finish Carpenter, Millwork Subcontractor</text><text x="1116.7" y="295" textLength="50.0" lengthAdjust="spacing">08-Aug-12</text><text x="1178" y="295" textLength="243.0" lengthAdjust="spacing">Finishes &amp; Fit-out Subcontractor, Rough Carpenter</text><text x="1128.5" y="313" textLength="50.0" lengthAdjust="spacing">15-Aug-12</text><text x="1189.5" y="313" textLength="243.0" lengthAdjust="spacing">Finishes &amp; Fit-out Subcontractor, Rough Carpenter</text><text x="1143.5" y="331" textLength="50.0" lengthAdjust="spacing">24-Aug-12</text><text x="1204.5" y="331" textLength="243.0" lengthAdjust="spacing">Finishes &amp; Fit-out Subcontractor, Rough Carpenter</text><text x="1155" y="349" textLength="50.0" lengthAdjust="spacing">31-Aug-12</text><text x="1216" y="349" textLength="156.0" lengthAdjust="spacing">Floor and Carpet Layer, Plumber</text><text x="948" y="187" textLength="73.0" lengthAdjust="spacing">Shell Complete</text><text x="872" y="367" textLength="51.5" lengthAdjust="spacing">12-Mar-12</text><text x="934" y="367" textLength="175.7" lengthAdjust="spacing">Conveying Subcontractor, Electrician</text><text x="1302.7" y="421" textLength="50.0" lengthAdjust="spacing">29-Nov-12</text><text x="1232" y="439" textLength="48.0" lengthAdjust="spacing">17-Oct-12</text><text x="1291" y="439" textLength="150.0" lengthAdjust="spacing">Pool Installation Subcontractor</text></g></svg>
<div class="b " style="left:1347px;top:142px;width:18px;height:316px;background:#f0f0f0;"></div>
<div class="b " style="left:453px;top:441px;width:894px;height:17px;background:#f0f0f0;"></div>
<div class="b " style="left:1348px;top:236px;width:15px;height:17px;background:#cdcdcd;"></div>
<div class="b " style="left:828px;top:442px;width:17px;height:14px;background:#cdcdcd;"></div>
<svg style="left:1347px;top:142px" width="18" height="299" viewBox="1347 142 18 299" fill="none" stroke="#5c5c5c" stroke-width="2.100"><path d="M1351.500 153.500l3.500-3.800 3.500 3.800"/><path d="M1351.500 429.500l3.500 3.800 3.500-3.800"/></svg>
<svg style="left:454px;top:441px" width="893" height="16" viewBox="454 441 893 16" fill="none" stroke="#5c5c5c" stroke-width="2.100"><path d="M465 445.200l-3.800 3.500 3.800 3.500"/><path d="M1337 445.200l3.800 3.500-3.800 3.500"/></svg>
</div>
<div id="legend">
<div class="b " style="left:0px;top:459px;width:1366px;height:4px;background:#e9e9e9;"></div>
<div class="b " style="left:0px;top:462px;width:449px;height:276px;background:#fff;border-left:1px solid #c8c8c8;border-top:1px solid #cfcfcf;border-right:1px solid #cdcdcd;border-bottom:1px solid #cdcdcd"></div>
<span class="t " style="left:7px;top:474px;font-size:11px;color:#000;letter-spacing:-0.295px;">By Resources:</span>
<svg style="left:0px;top:463px" width="120" height="110" viewBox="0 463 120 110" shape-rendering="crispEdges"><defs><pattern id="hBL" x="5" y="466" width="8" height="8" patternUnits="userSpaceOnUse"><rect width="8" height="8" fill="#fff"/><path d="M0 0h1v1h-1zM0 7h1v1h-1zM1 1h1v1h-1zM1 6h1v1h-1zM2 2h1v1h-1zM2 5h1v1h-1zM3 3h1v1h-1zM3 4h1v1h-1zM4 3h1v1h-1zM4 4h1v1h-1zM5 2h1v1h-1zM5 5h1v1h-1zM6 1h1v1h-1zM6 6h1v1h-1zM7 0h1v1h-1zM7 7h1v1h-1z" fill="#0000a8" stroke="none"/><path d="M1 0h1v1h-1zM6 0h1v1h-1zM0 1h1v1h-1zM2 1h1v1h-1zM5 1h1v1h-1zM7 1h1v1h-1zM1 2h1v1h-1zM3 2h1v1h-1zM4 2h1v1h-1zM6 2h1v1h-1zM2 3h1v1h-1zM5 3h1v1h-1zM2 4h1v1h-1zM5 4h1v1h-1zM1 5h1v1h-1zM3 5h1v1h-1zM4 5h1v1h-1zM6 5h1v1h-1zM0 6h1v1h-1zM2 6h1v1h-1zM5 6h1v1h-1zM7 6h1v1h-1zM1 7h1v1h-1zM6 7h1v1h-1z" fill="#0000a8" fill-opacity="0.22" stroke="none"/></pattern><pattern id="hYL" x="5" y="466" width="8" height="8" patternUnits="userSpaceOnUse"><rect width="8" height="8" fill="#fff"/><path d="M0 0h1v1h-1zM0 7h1v1h-1zM1 1h1v1h-1zM1 6h1v1h-1zM2 2h1v1h-1zM2 5h1v1h-1zM3 3h1v1h-1zM3 4h1v1h-1zM4 3h1v1h-1zM4 4h1v1h-1zM5 2h1v1h-1zM5 5h1v1h-1zM6 1h1v1h-1zM6 6h1v1h-1zM7 0h1v1h-1zM7 7h1v1h-1z" fill="#ffff00" stroke="none"/><path d="M1 0h1v1h-1zM6 0h1v1h-1zM0 1h1v1h-1zM2 1h1v1h-1zM5 1h1v1h-1zM7 1h1v1h-1zM1 2h1v1h-1zM3 2h1v1h-1zM4 2h1v1h-1zM6 2h1v1h-1zM2 3h1v1h-1zM5 3h1v1h-1zM2 4h1v1h-1zM5 4h1v1h-1zM1 5h1v1h-1zM3 5h1v1h-1zM4 5h1v1h-1zM6 5h1v1h-1zM0 6h1v1h-1zM2 6h1v1h-1zM5 6h1v1h-1zM7 6h1v1h-1zM1 7h1v1h-1zM6 7h1v1h-1z" fill="#ffff00" fill-opacity="0.22" stroke="none"/></pattern><pattern id="hRL" x="5" y="466" width="8" height="8" patternUnits="userSpaceOnUse"><rect width="8" height="8" fill="#fff"/><path d="M0 0h1v1h-1zM0 7h1v1h-1zM1 1h1v1h-1zM1 6h1v1h-1zM2 2h1v1h-1zM2 5h1v1h-1zM3 3h1v1h-1zM3 4h1v1h-1zM4 3h1v1h-1zM4 4h1v1h-1zM5 2h1v1h-1zM5 5h1v1h-1zM6 1h1v1h-1zM6 6h1v1h-1zM7 0h1v1h-1zM7 7h1v1h-1z" fill="#ff0000" stroke="none"/><path d="M1 0h1v1h-1zM6 0h1v1h-1zM0 1h1v1h-1zM2 1h1v1h-1zM5 1h1v1h-1zM7 1h1v1h-1zM1 2h1v1h-1zM3 2h1v1h-1zM4 2h1v1h-1zM6 2h1v1h-1zM2 3h1v1h-1zM5 3h1v1h-1zM2 4h1v1h-1zM5 4h1v1h-1zM1 5h1v1h-1zM3 5h1v1h-1zM4 5h1v1h-1zM6 5h1v1h-1zM0 6h1v1h-1zM2 6h1v1h-1zM5 6h1v1h-1zM7 6h1v1h-1zM1 7h1v1h-1zM6 7h1v1h-1z" fill="#ff0000" fill-opacity="0.22" stroke="none"/></pattern></defs><rect x="7.500" y="494.5" width="30" height="17" fill="url(#hBL)" stroke="#000"/><rect x="7.500" y="517.5" width="30" height="17" fill="url(#hYL)" stroke="#000"/><rect x="7.500" y="540.5" width="30" height="17" fill="url(#hRL)" stroke="#000"/></svg>
<span class="t " style="left:42.5px;top:498px;font-size:11px;color:#000;letter-spacing:-0.688px;">HVAC</span>
<span class="t " style="left:42.5px;top:521px;font-size:11px;color:#000;letter-spacing:-0.094px;">Painter</span>
<span class="t " style="left:42.5px;top:544px;font-size:11px;color:#000;letter-spacing:-0.005px;">Electrician</span>
</div>
<div id="chart">
<div class="b " style="left:449px;top:462px;width:4px;height:276px;background:#e9e9e9;"></div>
<div class="b " style="left:452px;top:462px;width:913px;height:276px;background:#fff;border-left:1px solid #cdcdcd;border-top:1px solid #cfcfcf;border-right:1px solid #cdcdcd;border-bottom:1px solid #cdcdcd"></div>
<svg style="left:454px;top:463px" width="893" height="256" viewBox="454 463 893 256" shape-rendering="crispEdges"><defs><pattern id="hB" x="454" y="464" width="8" height="8" patternUnits="userSpaceOnUse"><rect width="8" height="8" fill="#fff"/><path d="M0 0h1v1h-1zM0 7h1v1h-1zM1 1h1v1h-1zM1 6h1v1h-1zM2 2h1v1h-1zM2 5h1v1h-1zM3 3h1v1h-1zM3 4h1v1h-1zM4 3h1v1h-1zM4 4h1v1h-1zM5 2h1v1h-1zM5 5h1v1h-1zM6 1h1v1h-1zM6 6h1v1h-1zM7 0h1v1h-1zM7 7h1v1h-1z" fill="#0000a8" stroke="none"/><path d="M1 0h1v1h-1zM6 0h1v1h-1zM0 1h1v1h-1zM2 1h1v1h-1zM5 1h1v1h-1zM7 1h1v1h-1zM1 2h1v1h-1zM3 2h1v1h-1zM4 2h1v1h-1zM6 2h1v1h-1zM2 3h1v1h-1zM5 3h1v1h-1zM2 4h1v1h-1zM5 4h1v1h-1zM1 5h1v1h-1zM3 5h1v1h-1zM4 5h1v1h-1zM6 5h1v1h-1zM0 6h1v1h-1zM2 6h1v1h-1zM5 6h1v1h-1zM7 6h1v1h-1zM1 7h1v1h-1zM6 7h1v1h-1z" fill="#0000a8" fill-opacity="0.22" stroke="none"/></pattern><pattern id="hY" x="454" y="464" width="8" height="8" patternUnits="userSpaceOnUse"><rect width="8" height="8" fill="#fff"/><path d="M0 0h1v1h-1zM0 7h1v1h-1zM1 1h1v1h-1zM1 6h1v1h-1zM2 2h1v1h-1zM2 5h1v1h-1zM3 3h1v1h-1zM3 4h1v1h-1zM4 3h1v1h-1zM4 4h1v1h-1zM5 2h1v1h-1zM5 5h1v1h-1zM6 1h1v1h-1zM6 6h1v1h-1zM7 0h1v1h-1zM7 7h1v1h-1z" fill="#ffff00" stroke="none"/><path d="M1 0h1v1h-1zM6 0h1v1h-1zM0 1h1v1h-1zM2 1h1v1h-1zM5 1h1v1h-1zM7 1h1v1h-1zM1 2h1v1h-1zM3 2h1v1h-1zM4 2h1v1h-1zM6 2h1v1h-1zM2 3h1v1h-1zM5 3h1v1h-1zM2 4h1v1h-1zM5 4h1v1h-1zM1 5h1v1h-1zM3 5h1v1h-1zM4 5h1v1h-1zM6 5h1v1h-1zM0 6h1v1h-1zM2 6h1v1h-1zM5 6h1v1h-1zM7 6h1v1h-1zM1 7h1v1h-1zM6 7h1v1h-1z" fill="#ffff00" fill-opacity="0.22" stroke="none"/></pattern><pattern id="hR" x="454" y="464" width="8" height="8" patternUnits="userSpaceOnUse"><rect width="8" height="8" fill="#fff"/><path d="M0 0h1v1h-1zM0 7h1v1h-1zM1 1h1v1h-1zM1 6h1v1h-1zM2 2h1v1h-1zM2 5h1v1h-1zM3 3h1v1h-1zM3 4h1v1h-1zM4 3h1v1h-1zM4 4h1v1h-1zM5 2h1v1h-1zM5 5h1v1h-1zM6 1h1v1h-1zM6 6h1v1h-1zM7 0h1v1h-1zM7 7h1v1h-1z" fill="#ff0000" stroke="none"/><path d="M1 0h1v1h-1zM6 0h1v1h-1zM0 1h1v1h-1zM2 1h1v1h-1zM5 1h1v1h-1zM7 1h1v1h-1zM1 2h1v1h-1zM3 2h1v1h-1zM4 2h1v1h-1zM6 2h1v1h-1zM2 3h1v1h-1zM5 3h1v1h-1zM2 4h1v1h-1zM5 4h1v1h-1zM1 5h1v1h-1zM3 5h1v1h-1zM4 5h1v1h-1zM6 5h1v1h-1zM0 6h1v1h-1zM2 6h1v1h-1zM5 6h1v1h-1zM7 6h1v1h-1zM1 7h1v1h-1zM6 7h1v1h-1z" fill="#ff0000" fill-opacity="0.22" stroke="none"/></pattern></defs><g stroke="#c2c2c2" stroke-dasharray="4 2" fill="none"><path d="M493.5 463V690"/><path d="M544.5 463V690"/><path d="M594.5 463V690"/><path d="M644.5 463V690"/><path d="M694.5 463V690"/><path d="M745.5 463V690"/><path d="M796.5 463V690"/><path d="M843.5 463V690"/><path d="M894.5 463V690"/><path d="M943.5 463V690"/><path d="M994.5 463V690"/><path d="M1044.5 463V690"/><path d="M1095.5 463V690"/><path d="M1145.5 463V690"/><path d="M1195.5 463V690"/><path d="M1246.5 463V690"/><path d="M1295.5 463V690"/><path d="M454 501.5H1347"/><path d="M454 539.5H1347"/><path d="M454 576.5H1347"/><path d="M454 614.5H1347"/><path d="M454 651.5H1347"/></g><rect x="493.5" y="674.5" width="49" height="13" fill="url(#hR)" stroke="#000"/><rect x="544.5" y="630.5" width="49" height="57" fill="url(#hR)" stroke="#000"/><rect x="594.5" y="561.5" width="49" height="126" fill="url(#hR)" stroke="#000"/><rect x="594.5" y="557.5" width="49" height="4" fill="url(#hY)" stroke="#000"/><rect x="594.5" y="553.5" width="49" height="4" fill="url(#hB)" stroke="#000"/><rect x="644.5" y="549.5" width="49" height="138" fill="url(#hR)" stroke="#000"/><rect x="644.5" y="537.5" width="49" height="11" fill="url(#hY)" stroke="#000"/><rect x="644.5" y="524.5" width="49" height="12" fill="url(#hB)" stroke="#000"/><rect x="694.5" y="529.5" width="49" height="158" fill="url(#hR)" stroke="#000"/><rect x="694.5" y="515.5" width="49" height="12" fill="url(#hY)" stroke="#000"/><rect x="694.5" y="501.5" width="49" height="13" fill="url(#hB)" stroke="#000"/><rect x="745.5" y="604.5" width="49" height="83" fill="url(#hR)" stroke="#000"/><rect x="745.5" y="589.5" width="49" height="14" fill="url(#hY)" stroke="#000"/><rect x="745.5" y="572.5" width="49" height="17" fill="url(#hB)" stroke="#000"/><rect x="796.5" y="623.5" width="46" height="64" fill="url(#hR)" stroke="#000"/><rect x="796.5" y="610.5" width="46" height="13" fill="url(#hY)" stroke="#000"/><rect x="796.5" y="584.5" width="46" height="24" fill="url(#hB)" stroke="#000"/><rect x="843.5" y="631.5" width="49" height="56" fill="url(#hR)" stroke="#000"/><rect x="843.5" y="600.5" width="49" height="30" fill="url(#hY)" stroke="#000"/><rect x="843.5" y="570.5" width="49" height="28" fill="url(#hB)" stroke="#000"/><rect x="894.5" y="649.5" width="48" height="38" fill="url(#hR)" stroke="#000"/><rect x="894.5" y="638.5" width="48" height="9" fill="url(#hY)" stroke="#000"/><rect x="894.5" y="610.5" width="48" height="27" fill="url(#hB)" stroke="#000"/><rect x="943.5" y="659.5" width="49" height="28" fill="url(#hR)" stroke="#000"/><rect x="943.5" y="655.5" width="49" height="3" fill="url(#hY)" stroke="#000"/><rect x="943.5" y="627.5" width="49" height="28" fill="url(#hB)" stroke="#000"/><rect x="994.5" y="648.5" width="48" height="39" fill="url(#hR)" stroke="#000"/><rect x="994.5" y="621.5" width="48" height="27" fill="url(#hB)" stroke="#000"/><rect x="1044.5" y="643.5" width="49" height="44" fill="url(#hR)" stroke="#000"/><rect x="1044.5" y="638.5" width="49" height="4" fill="url(#hY)" stroke="#000"/><rect x="1044.5" y="606.5" width="49" height="31" fill="url(#hB)" stroke="#000"/><rect x="1095.5" y="647.5" width="49" height="40" fill="url(#hR)" stroke="#000"/><rect x="1095.5" y="641.5" width="49" height="6" fill="url(#hY)" stroke="#000"/><rect x="1095.5" y="613.5" width="49" height="26" fill="url(#hB)" stroke="#000"/><rect x="1145.5" y="665.5" width="49" height="22" fill="url(#hR)" stroke="#000"/><rect x="1145.5" y="647.5" width="49" height="17" fill="url(#hB)" stroke="#000"/><rect x="1195.5" y="668.5" width="49" height="19" fill="url(#hR)" stroke="#000"/><rect x="1195.5" y="647.5" width="49" height="19" fill="url(#hB)" stroke="#000"/><rect x="1246.5" y="673.5" width="48" height="14" fill="url(#hR)" stroke="#000"/><rect x="1246.5" y="667.5" width="48" height="5" fill="url(#hY)" stroke="#000"/><rect x="1246.5" y="653.5" width="48" height="14" fill="url(#hB)" stroke="#000"/><rect x="1295.5" y="671.5" width="49" height="16" fill="url(#hR)" stroke="#000"/><rect x="1295.5" y="668.5" width="49" height="2" fill="url(#hY)" stroke="#000"/><rect x="1295.5" y="651.5" width="49" height="16" fill="url(#hB)" stroke="#000"/><path d="M544 631.500H594" stroke="#000"/><path d="M1345.500 679V688" stroke="#000"/><rect x="459.500" y="496.5" width="33" height="14" fill="#fff" stroke="#c8c8c8"/><rect x="459.500" y="534.5" width="33" height="14" fill="#fff" stroke="#c8c8c8"/><rect x="459.500" y="571.5" width="33" height="14" fill="#fff" stroke="#c8c8c8"/><rect x="459.500" y="609.5" width="33" height="14" fill="#fff" stroke="#c8c8c8"/><rect x="459.500" y="646.5" width="33" height="14" fill="#fff" stroke="#c8c8c8"/><g shape-rendering="auto"><text x="464.248" y="508" textLength="23.5" lengthAdjust="spacing">137d</text><text x="464.645" y="546" textLength="22.7" lengthAdjust="spacing">110d</text><text x="467.188" y="583" textLength="17.6" lengthAdjust="spacing">82d</text><text x="467.188" y="621" textLength="17.6" lengthAdjust="spacing">55d</text><text x="467.188" y="658" textLength="17.6" lengthAdjust="spacing">27d</text></g><rect x="454" y="690" width="893" height="29" fill="#fff"/><g stroke="#5a5a5a" fill="none"><path d="M454 690.500H1347M454 705.500H1347"/><path d="M493.5 690V705"/><path d="M544.5 690V705"/><path d="M594.5 690V719"/><path d="M644.5 690V705"/><path d="M694.5 690V705"/><path d="M745.5 690V719"/><path d="M796.5 690V705"/><path d="M843.5 690V705"/><path d="M894.5 690V719"/><path d="M943.5 690V705"/><path d="M994.5 690V705"/><path d="M1044.5 690V719"/><path d="M1095.5 690V705"/><path d="M1145.5 690V705"/><path d="M1195.5 690V719"/><path d="M1246.5 690V705"/><path d="M1295.5 690V705"/><path d="M1346.5 690V719"/></g><g shape-rendering="auto"><text x="459.342" y="702" textLength="14.3" lengthAdjust="spacing" font-weight="bold">Jul</text><text x="507.874" y="702" textLength="19.3" lengthAdjust="spacing" font-weight="bold">Aug</text><text x="558.75" y="702" textLength="18.5" lengthAdjust="spacing" font-weight="bold">Sep</text><text x="609.25" y="702" textLength="17.5" lengthAdjust="spacing" font-weight="bold">Oct</text><text x="658.5" y="702" textLength="19.0" lengthAdjust="spacing" font-weight="bold">Nov</text><text x="709.416" y="702" textLength="18.2" lengthAdjust="spacing" font-weight="bold">Dec</text><text x="760.964" y="702" textLength="17.1" lengthAdjust="spacing" font-weight="bold">Jan</text><text x="809.697" y="702" textLength="17.6" lengthAdjust="spacing" font-weight="bold">Feb</text><text x="858.1" y="702" textLength="18.8" lengthAdjust="spacing" font-weight="bold">Mar</text><text x="908.971" y="702" textLength="17.1" lengthAdjust="spacing" font-weight="bold">Apr</text><text x="957.5" y="702" textLength="20.0" lengthAdjust="spacing" font-weight="bold">May</text><text x="1009.2" y="702" textLength="17.6" lengthAdjust="spacing" font-weight="bold">Jun</text><text x="1061.34" y="702" textLength="14.3" lengthAdjust="spacing" font-weight="bold">Jul</text><text x="1109.37" y="702" textLength="19.3" lengthAdjust="spacing" font-weight="bold">Aug</text><text x="1159.75" y="702" textLength="18.5" lengthAdjust="spacing" font-weight="bold">Sep</text><text x="1210.75" y="702" textLength="17.5" lengthAdjust="spacing" font-weight="bold">Oct</text><text x="1260" y="702" textLength="19.0" lengthAdjust="spacing" font-weight="bold">Nov</text><text x="1310.42" y="702" textLength="18.2" lengthAdjust="spacing" font-weight="bold">Dec</text><text x="490.7" y="717" textLength="54.6" lengthAdjust="spacing" font-weight="bold">Qtr 3, 2011</text><text x="642.2" y="717" textLength="54.6" lengthAdjust="spacing" font-weight="bold">Qtr 4, 2011</text><text x="792.2" y="717" textLength="54.6" lengthAdjust="spacing" font-weight="bold">Qtr 1, 2012</text><text x="941.7" y="717" textLength="54.6" lengthAdjust="spacing" font-weight="bold">Qtr 2, 2012</text><text x="1092.2" y="717" textLength="54.6" lengthAdjust="spacing" font-weight="bold">Qtr 3, 2012</text><text x="1243.2" y="717" textLength="54.6" lengthAdjust="spacing" font-weight="bold">Qtr 4, 2012</text></g></svg>
<div class="b " style="left:1347px;top:463px;width:18px;height:274px;background:#f0f0f0;"></div>
<div class="b " style="left:454px;top:719px;width:893px;height:18px;background:#f0f0f0;"></div>
<div class="b " style="left:1348px;top:481px;width:15px;height:17px;background:#cdcdcd;"></div>
<div class="b " style="left:824px;top:720px;width:17px;height:15px;background:#cdcdcd;"></div>
<svg style="left:1347px;top:463px" width="18" height="256" viewBox="1347 463 18 256" fill="none" stroke="#5c5c5c" stroke-width="2.100"><path d="M1351.500 474.500l3.500-3.800 3.500 3.800"/><path d="M1351.500 708.500l3.500 3.800 3.500-3.800"/></svg>
<svg style="left:454px;top:719px" width="893" height="18" viewBox="454 719 893 18" fill="none" stroke="#5c5c5c" stroke-width="2.100"><path d="M465 723.700l-3.800 3.500 3.800 3.500"/><path d="M1337 723.700l3.800 3.500-3.800 3.500"/></svg>
</div>
</body></html>
